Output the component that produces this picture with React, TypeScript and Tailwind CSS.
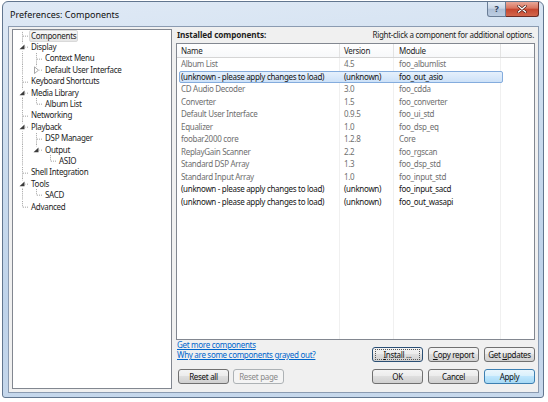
import React from "react";

type Cell = "blank" | "vert" | "tee" | "ell" | "first";
type Exp = "open" | "closed" | undefined;

const tree: { label: string; cells: Cell[]; exp?: Exp; sel?: boolean }[] = [
  { label: "Components", cells: ["first"], sel: true },
  { label: "Display", cells: ["tee"], exp: "open" },
  { label: "Context Menu", cells: ["vert", "tee"] },
  { label: "Default User Interface", cells: ["vert", "ell"], exp: "closed" },
  { label: "Keyboard Shortcuts", cells: ["tee"] },
  { label: "Media Library", cells: ["tee"], exp: "open" },
  { label: "Album List", cells: ["vert", "ell"] },
  { label: "Networking", cells: ["tee"] },
  { label: "Playback", cells: ["tee"], exp: "open" },
  { label: "DSP Manager", cells: ["vert", "tee"] },
  { label: "Output", cells: ["vert", "ell"], exp: "open" },
  { label: "ASIO", cells: ["vert", "blank", "ell"] },
  { label: "Shell Integration", cells: ["tee"] },
  { label: "Tools", cells: ["tee"], exp: "open" },
  { label: "SACD", cells: ["vert", "ell"] },
  { label: "Advanced", cells: ["ell"] },
];

const rows: { name: string; ver: string; mod: string; dark?: boolean; sel?: boolean }[] = [
  { name: "Album List", ver: "4.5", mod: "foo_albumlist" },
  { name: "(unknown - please apply changes to load)", ver: "(unknown)", mod: "foo_out_asio", dark: true, sel: true },
  { name: "CD Audio Decoder", ver: "3.0", mod: "foo_cdda" },
  { name: "Converter", ver: "1.5", mod: "foo_converter" },
  { name: "Default User Interface", ver: "0.9.5", mod: "foo_ui_std" },
  { name: "Equalizer", ver: "1.0", mod: "foo_dsp_eq" },
  { name: "foobar2000 core", ver: "1.2.8", mod: "Core" },
  { name: "ReplayGain Scanner", ver: "2.2", mod: "foo_rgscan" },
  { name: "Standard DSP Array", ver: "1.3", mod: "foo_dsp_std" },
  { name: "Standard Input Array", ver: "1.0", mod: "foo_input_std" },
  { name: "(unknown - please apply changes to load)", ver: "(unknown)", mod: "foo_input_sacd", dark: true },
  { name: "(unknown - please apply changes to load)", ver: "(unknown)", mod: "foo_out_wasapi", dark: true },
];

function TreeCell({ kind, exp }: { kind: Cell; exp?: Exp }) {
  const s = { stroke: "#a0a0a0", strokeWidth: 1, strokeDasharray: "1 1" };
  return (
    <svg width="14" height="100%" viewBox="0 0 14 12" preserveAspectRatio="none" className="shrink-0 h-full">
      {kind === "vert" && <line x1="7.5" y1="0" x2="7.5" y2="12" {...s} />}
      {kind === "tee" && (
        <>
          <line x1="7.5" y1="0" x2="7.5" y2="12" {...s} />
          <line x1="8" y1="6.5" x2="14" y2="6.5" {...s} />
        </>
      )}
      {kind === "ell" && (
        <>
          <line x1="7.5" y1="0" x2="7.5" y2="6.5" {...s} />
          <line x1="8" y1="6.5" x2="14" y2="6.5" {...s} />
        </>
      )}
      {kind === "first" && (
        <>
          <line x1="7.5" y1="2" x2="7.5" y2="12" {...s} />
          <line x1="8" y1="6.5" x2="14" y2="6.5" {...s} />
        </>
      )}
      {exp && <rect x="3.5" y="2.5" width="7" height="8" fill="#ffffff" />}
      {exp === "open" && <polygon points="9.5,3.8 9.5,8.8 4.5,8.8" fill="#3c3c3c" />}
      {exp === "closed" && (
        <polygon points="5.5,3 5.5,10 9.5,6.5" fill="#ffffff" stroke="#9a9a9a" strokeWidth="0.9" />
      )}
    </svg>
  );
}

function Btn({
  children,
  kind = "normal",
  className = "",
}: {
  children: React.ReactNode;
  kind?: "normal" | "focus" | "default" | "disabled";
  className?: string;
}) {
  const base =
    "w-[51px] h-[15px] rounded-[3px] border flex items-center justify-center text-[8px] leading-none shrink-0 whitespace-nowrap ";
  const styles = {
    normal:
      "border-[#707070] text-[#111] bg-[linear-gradient(#f4f4f4,#ececec_45%,#dedede_50%,#d0d0d0)]",
    focus:
      "border-[#2a4f74] text-[#111] bg-[linear-gradient(#f4f4f4,#ececec_45%,#dedede_50%,#d0d0d0)]",
    default:
      "border-[#3c7fb1] text-[#111] bg-[linear-gradient(#eaf6fd,#d9f0fc_45%,#bee6fd_50%,#a7d9f5)]",
    disabled: "border-[#adb2b5] text-[#8a8a8a] bg-[#f4f4f4]",
  } as const;
  return (
    <div className={base + styles[kind] + " " + className}>
      {kind === "focus" ? (
        <div className="w-[45px] h-[11px] border border-dotted border-[#555] flex items-center justify-center">
          {children}
        </div>
      ) : (
        children
      )}
    </div>
  );
}

export default function App() {
  return (
    <div className="w-[548px] h-[402px] bg-white overflow-hidden font-['Noto_Sans','Open_Sans',sans-serif] text-[#1e1e1e] tracking-[-0.3px]">
      <div className="ml-[2px] mt-[1px] w-[542px] h-[397px] rounded-t-[6px] rounded-b-[3px] border border-[#62768f] bg-[linear-gradient(175deg,#dfe9f5,#c9dbee_40%,#bfd3ea_70%,#c8d9ec)] flex flex-col">
        {/* title bar */}
        <div className="h-[24px] flex items-start shrink-0">
          <div className="pl-[7px] pt-[6px] text-[9px] leading-[13px] tracking-normal text-[#101010] flex-1">
            Preferences: Components
          </div>
          <div className="flex mr-[4px]">
            <div className="w-[19px] h-[15px] rounded-bl-[3px] border border-t-0 border-[#6a7d96] bg-[linear-gradient(#e4ecf5,#c9d6e6_45%,#aebfd6_50%,#bccde2)] flex items-center justify-center text-[9px] font-bold text-[#2a3a55]">
              ?
            </div>
            <div className="w-[33px] h-[15px] rounded-br-[3px] border border-t-0 border-l-0 border-[#6b2b25] bg-[linear-gradient(#e9a898,#d9735d_45%,#c5452e_50%,#d2664c)] flex items-center justify-center">
              <svg width="10" height="8" viewBox="0 0 10 8">
                <path d="M1.5 1 L8.5 7 M8.5 1 L1.5 7" stroke="#3a0e08" strokeWidth="2.6" strokeLinecap="round" />
                <path d="M1.5 1 L8.5 7 M8.5 1 L1.5 7" stroke="#ffffff" strokeWidth="1.6" strokeLinecap="round" />
              </svg>
            </div>
          </div>
        </div>
        {/* client */}
        <div className="ml-[5px] mr-[4px] mb-[4px] flex-1 border border-[#8b9bb1] bg-[#f0f0f0] flex pl-[3px] pt-[2px] pr-[3px] gap-[4px]">
          {/* tree */}
          <div className="w-[160px] h-[360px] border border-[#828790] bg-white pl-[2px] shrink-0">
            {tree.map((t, i) => (
              <div key={i} className="h-[11.4px] flex items-stretch">
                {t.cells.map((c, j) => (
                  <TreeCell key={j} kind={c} exp={j === t.cells.length - 1 ? t.exp : undefined} />
                ))}
                <div className="flex items-center">
                  <span
                    className={
                      "text-[8px] leading-[10px] whitespace-nowrap px-[1px] border " +
                      (t.sel
                        ? "border-[#d9d9d9] rounded-[2px] bg-[linear-gradient(#f8f8f8,#e6e6e6)] h-[12px] flex items-center"
                        : "border-transparent")
                    }
                  >
                    {t.label}
                  </span>
                </div>
              </div>
            ))}
          </div>
          {/* right panel */}
          <div className="w-[359px] flex flex-col">
            <div className="h-[14px] flex justify-between text-[8px] leading-[11px]">
              <span className="font-bold pl-[1px] tracking-[-0.1px] text-[8.2px]">Installed components:</span>
              <span className="pr-[1px]">Right-click a component for additional options.</span>
            </div>
            <div className="h-[297px] border border-[#828790] bg-white flex flex-col shrink-0">
              <div className="h-[14px] flex border-b border-[#d5d5d5] bg-[linear-gradient(#ffffff,#f7f8fa)] text-[8px] shrink-0">
                <div className="w-[163px] border-r border-[#e3e3e3] pl-[4px] flex items-center">Name</div>
                <div className="w-[54px] border-r border-[#e3e3e3] pl-[4px] flex items-center">Version</div>
                <div className="w-[107px] border-r border-[#e3e3e3] pl-[5px] flex items-center">Module</div>
                <div className="flex-1" />
              </div>
              <div className="flex-1 bg-[linear-gradient(to_right,transparent_162px,#f0f0f0_162px,#f0f0f0_163px,transparent_163px,transparent_216px,#f0f0f0_216px,#f0f0f0_217px,transparent_217px,transparent_323px,#f0f0f0_323px,#f0f0f0_324px,transparent_324px)]">
                {rows.map((r, i) => (
                  <div
                    key={i}
                    className={
                      "ml-[2px] w-[324px] h-[12.5px] flex items-center border rounded-[2px] text-[8px] whitespace-nowrap " +
                      (r.sel
                        ? "border-[#84acdd] bg-[linear-gradient(#e6f0fc,#cde1f8)] "
                        : "border-transparent ") +
                      (r.dark ? "text-[#141414]" : "text-[#6f6f6f]")
                    }
                  >
                    <div className="w-[160px] pl-[1px] overflow-hidden">{r.name}</div>
                    <div className="w-[54px] pl-[4px]">{r.ver}</div>
                    <div className="w-[108px] pl-[5px]">{r.mod}</div>
                  </div>
                ))}
              </div>
            </div>
            <div className="h-[22px] flex justify-between items-end">
              <div className="flex flex-col text-[8px] text-[#0066cc] underline pl-[1px] self-start">
                <span className="h-[10px] leading-[10px]">Get more components</span>
                <span className="h-[10px] leading-[10px]">Why are some components grayed out?</span>
              </div>
              <div className="flex gap-[5px]">
                <Btn kind="focus">
                  <span>
                    <u>I</u>nstall ...
                  </span>
                </Btn>
                <Btn>
                  <span>
                    <u>C</u>opy report
                  </span>
                </Btn>
                <Btn>
                  <span>
                    Get <u>u</u>pdates
                  </span>
                </Btn>
              </div>
            </div>
            <div className="mt-[7px] flex justify-between">
              <div className="flex gap-[4px] ml-[2px]">
                <Btn>Reset all</Btn>
                <Btn kind="disabled">Reset page</Btn>
              </div>
              <div className="flex gap-[5px]">
                <Btn>OK</Btn>
                <Btn>Cancel</Btn>
                <Btn kind="default">Apply</Btn>
              </div>
            </div>
          </div>
        </div>
      </div>
    </div>
  );
}
